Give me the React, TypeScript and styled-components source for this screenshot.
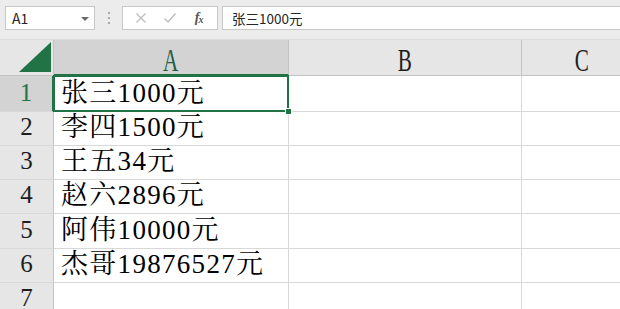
import React from 'react';
import styled, { createGlobalStyle } from 'styled-components';

const GlobalStyle = createGlobalStyle`
  html, body {
    margin: 0;
    padding: 0;
    background: #ffffff;
  }
`;

const GREEN = '#217346';
const GRID = '#d8d8d8';
const HEADER_LINE = '#c4c4c4';

const COLS = [54, 235, 233, 120];
const ROW_HEIGHTS = [36, 34, 34, 34, 35, 34, 34];

const rows = [
  '张三1000元',
  '李四1500元',
  '王五34元',
  '赵六2896元',
  '阿伟10000元',
  '杰哥19876527元',
  '',
];

const Sheet = styled.div`
  width: 620px;
  height: 309px;
  overflow: hidden;
  background: #ffffff;
  font-family: 'Liberation Serif', 'Noto Serif CJK SC', 'Noto Sans CJK SC', serif;
`;

const FormulaBar = styled.div`
  height: 40px;
  box-sizing: border-box;
  background: #ececec;
  display: flex;
  align-items: flex-start;
  padding: 6px 0 0 5px;
  border-bottom: 1px solid #dcdcdc;
`;

const Field = styled.div<{ $width?: number }>`
  height: 24px;
  box-sizing: border-box;
  background: #ffffff;
  border: 1px solid #c8c8c8;
  display: flex;
  align-items: center;
  ${(p) => (p.$width ? `width: ${p.$width}px;` : 'flex: 1;')}
  font-family: 'Noto Sans CJK SC', 'Liberation Sans', sans-serif;
  font-size: 13px;
  color: #262626;
`;

const NameBox = styled(Field)`
  justify-content: space-between;
  padding: 0 5px 0 6px;
  font-size: 14px;
`;

const Caret = styled.span`
  width: 0;
  height: 0;
  border-left: 4px solid transparent;
  border-right: 4px solid transparent;
  border-top: 4px solid #6a6a6a;
  margin-top: 1px;
`;

const Grip = styled.div`
  width: 27px;
  height: 24px;
  display: flex;
  flex-direction: column;
  align-items: center;
  justify-content: center;
  gap: 3px;

  span {
    width: 2px;
    height: 2px;
    background: #a8a8a8;
  }
`;

const ButtonBox = styled(Field)`
  justify-content: space-around;
  padding: 0 4px;
  margin-right: 4px;
`;

const IconButton = styled.span`
  width: 24px;
  display: flex;
  justify-content: center;
  align-items: center;
  color: #b8b8b8;
`;

const Fx = styled.span`
  font-family: 'Liberation Serif', serif;
  font-style: italic;
  font-weight: bold;
  color: #555555;
  font-size: 14px;
  letter-spacing: -1px;

  sub {
    font-size: 10px;
    vertical-align: baseline;
    position: relative;
    top: 1px;
  }
`;

const Input = styled(Field)`
  padding-left: 9px;
  font-size: 13.5px;
  border-right: none;
`;

const Grid = styled.div`
  display: grid;
  grid-template-columns: ${COLS.map((c) => `${c}px`).join(' ')};
  grid-template-rows: 36px ${ROW_HEIGHTS.map((h) => `${h}px`).join(' ')};
`;

const Corner = styled.div`
  background: #e6e6e6;
  border-right: 1px solid ${HEADER_LINE};
  border-bottom: 1px solid ${HEADER_LINE};
  box-sizing: border-box;
  display: flex;
  justify-content: flex-end;
  align-items: flex-end;
  padding: 0 2px 3px 0;

  svg {
    display: block;
  }
`;

const ColHeader = styled.div<{ $active?: boolean }>`
  box-sizing: border-box;
  background: ${(p) => (p.$active ? '#d3d3d3' : '#e6e6e6')};
  border-right: 1px solid ${HEADER_LINE};
  border-bottom: ${(p) => (p.$active ? `2px solid ${GREEN}` : `1px solid ${HEADER_LINE}`)};
  display: flex;
  justify-content: center;
  align-items: center;
  padding-top: 5px;
  color: ${(p) => (p.$active ? '#1f5f45' : '#1e1e1e')};
`;

const HeaderLetter = styled.span`
  display: inline-block;
  font-family: 'Liberation Serif', serif;
  font-size: 32px;
  line-height: 1;
  transform: scaleX(0.66);
`;

const RowHeader = styled.div<{ $active?: boolean }>`
  box-sizing: border-box;
  background: ${(p) => (p.$active ? '#d3d3d3' : '#e6e6e6')};
  border-right: ${(p) => (p.$active ? `2px solid ${GREEN}` : `1px solid ${HEADER_LINE}`)};
  border-bottom: 1px solid ${GRID};
  display: flex;
  justify-content: center;
  align-items: flex-end;
  padding-bottom: 6px;
  font-family: 'Liberation Serif', serif;
  font-size: 25px;
  line-height: 1;
  color: ${(p) => (p.$active ? GREEN : '#1e1e1e')};
`;

const Cell = styled.div<{ $selected?: boolean }>`
  position: relative;
  box-sizing: border-box;
  border-right: 1px solid ${GRID};
  border-bottom: 1px solid ${GRID};
  display: flex;
  align-items: flex-end;
  padding: 0 0 4px 7px;
  font-size: 27px;
  letter-spacing: 1.3px;
  line-height: 1;
  color: #000000;
  white-space: nowrap;

  ${(p) =>
    p.$selected &&
    `
    &::after {
      content: '';
      position: absolute;
      left: -1px;
      top: -1px;
      right: -1px;
      bottom: -1px;
      border: 2px solid ${GREEN};
      pointer-events: none;
    }
    &::before {
      content: '';
      position: absolute;
      right: -4px;
      bottom: -4px;
      width: 5px;
      height: 5px;
      background: ${GREEN};
      border: 1px solid #ffffff;
      z-index: 2;
    }
  `}
`;

const CloseIcon = () => (
  <svg width="12" height="12" viewBox="0 0 12 12">
    <path d="M1.5 1.5 L10.5 10.5 M10.5 1.5 L1.5 10.5" stroke="#bdbdbd" strokeWidth="1.3" fill="none" />
  </svg>
);

const CheckIcon = () => (
  <svg width="14" height="12" viewBox="0 0 14 12">
    <path d="M1.5 6.5 L5 10 L12.5 1.5" stroke="#bdbdbd" strokeWidth="1.4" fill="none" />
  </svg>
);

const App = () => {
  const letters = ['A', 'B', 'C'];
  return (
    <>
      <GlobalStyle />
      <Sheet>
        <FormulaBar>
          <NameBox $width={90}>
            <span>A1</span>
            <Caret />
          </NameBox>
          <Grip>
            <span />
            <span />
            <span />
          </Grip>
          <ButtonBox $width={96}>
            <IconButton>
              <CloseIcon />
            </IconButton>
            <IconButton>
              <CheckIcon />
            </IconButton>
            <IconButton>
              <Fx>
                f<sub>x</sub>
              </Fx>
            </IconButton>
          </ButtonBox>
          <Input>{rows[0]}</Input>
        </FormulaBar>
        <Grid>
          <Corner>
            <svg width="32" height="30" viewBox="0 0 32 30">
              <polygon points="0,30 32,0 32,30" fill={GREEN} />
            </svg>
          </Corner>
          {letters.map((l, i) => (
            <ColHeader key={l} $active={i === 0}>
              <HeaderLetter>{l}</HeaderLetter>
            </ColHeader>
          ))}
          {rows.map((text, r) => (
            <React.Fragment key={r}>
              <RowHeader $active={r === 0}>{r + 1}</RowHeader>
              <Cell $selected={r === 0}>{text}</Cell>
              <Cell />
              <Cell />
            </React.Fragment>
          ))}
        </Grid>
      </Sheet>
    </>
  );
};

export default App;
